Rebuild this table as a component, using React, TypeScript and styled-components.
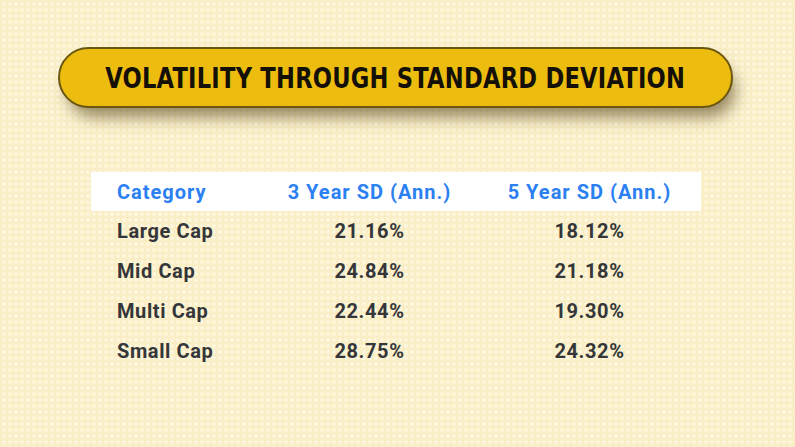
import styled, { createGlobalStyle } from 'styled-components';

const rows = [
	{ name: 'Large Cap', three: '21.16%', five: '18.12%' },
	{ name: 'Mid Cap', three: '24.84%', five: '21.18%' },
	{ name: 'Multi Cap', three: '22.44%', five: '19.30%' },
	{ name: 'Small Cap', three: '28.75%', five: '24.32%' },
];

export default function App() {
	return (
		<>
			<GlobalStyle />
			<Page>
				<TitlePill>
					<Title>VOLATILITY THROUGH STANDARD DEVIATION</Title>
				</TitlePill>
				<Table>
					<HeaderRow>
						<Cell $align='left'>Category</Cell>
						<Cell>3 Year SD (Ann.)</Cell>
						<Cell>5 Year SD (Ann.)</Cell>
					</HeaderRow>
					{rows.map((r) => (
						<Row key={r.name}>
							<Cell $align='left'>{r.name}</Cell>
							<Cell>{r.three}</Cell>
							<Cell>{r.five}</Cell>
						</Row>
					))}
				</Table>
			</Page>
		</>
	);
}

const GlobalStyle = createGlobalStyle`
	html, body {
		margin: 0;
		padding: 0;
	}
`;

const Page = styled.div`
	width: 795px;
	height: 447px;
	overflow: hidden;
	box-sizing: border-box;
	padding-top: 47px;
	background-color: #faeec6;
	background-image: radial-gradient(circle, #fef6dc 1.6px, transparent 2px);
	background-size: 6px 6px;
	background-position: 1px 1px;
	display: flex;
	flex-direction: column;
`;

const TitlePill = styled.div`
	margin-left: 58px;
	width: 675px;
	height: 61px;
	box-sizing: border-box;
	border: 2px solid #6b5710;
	border-radius: 31px;
	background: #ecbd0f;
	box-shadow: 6px 13px 16px -4px rgba(80, 64, 20, 0.6);
	display: flex;
	align-items: center;
	justify-content: center;
`;

const Title = styled.h1`
	margin: 0;
	font-family: 'DejaVu Sans Condensed', 'DejaVu Sans', sans-serif;
	font-weight: 700;
	font-size: 29px;
	letter-spacing: 0.3px;
	color: #141008;
	transform: scaleX(0.865);
	white-space: nowrap;
`;

const Table = styled.div`
	margin-top: 64px;
	margin-left: 91px;
	width: 610px;
	display: flex;
	flex-direction: column;
	font-family: Roboto, 'Liberation Sans', sans-serif;
	font-weight: 700;
	font-size: 20px;
	letter-spacing: 0.6px;
`;

const Row = styled.div`
	display: grid;
	grid-template-columns: 170px 217px 223px;
	height: 40px;
	align-items: center;
	color: #34363a;
`;

const HeaderRow = styled(Row)`
	height: 39px;
	background: #ffffff;
	color: #2b80f2;
	letter-spacing: 1px;
`;

const Cell = styled.div<{ $align?: 'left' | 'center' }>`
	text-align: ${({ $align }) => $align ?? 'center'};
	padding-left: ${({ $align }) => ($align === 'left' ? '26px' : '0')};
	white-space: nowrap;
`;
